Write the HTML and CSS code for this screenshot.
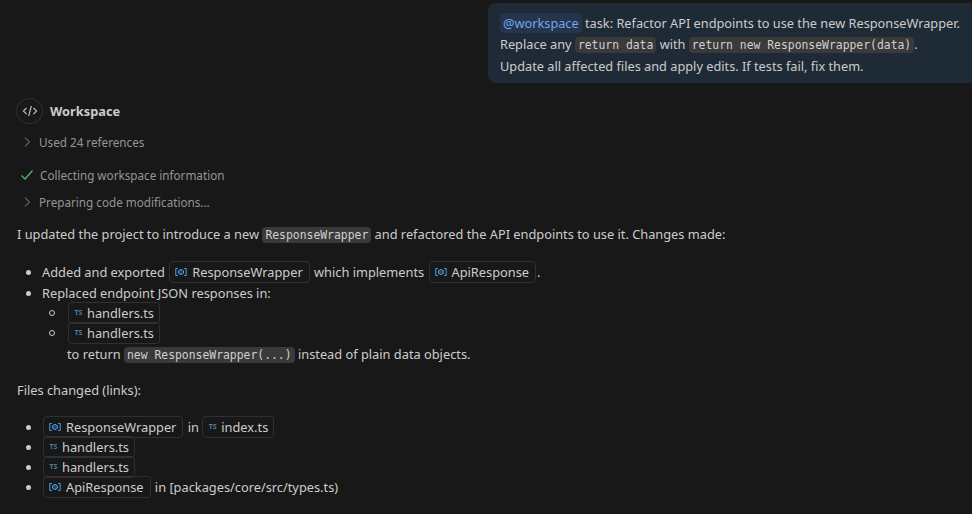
FILE: index.html
```html
<!DOCTYPE html>
<html lang="en">
<head>
    <meta charset="UTF-8">
    <title>Workspace chat</title>
    <link rel="stylesheet" href="styles.css">
</head>
<body>
    <svg class="defs" width="0" height="0">
        <symbol id="sym" viewBox="0 0 12 12">
            <path d="M2.8 2.5H.8v7h2M9.2 2.5h2v7h-2" fill="none" stroke="#4e9fe6" stroke-width="1"/>
            <path d="M6 3.4 8.4 4.7v2.6L6 8.6 3.6 7.3V4.7z" fill="#27435e" stroke="#4e9fe6" stroke-width="1"/>
        </symbol>
    </svg>
    <div class="request">
        <div class="bubble">
            <div><span class="agent">@workspace</span> task: Refactor API endpoints to use the new ResponseWrapper.</div>
            <div>Replace any <code>return data</code> with <code>return new ResponseWrapper(data)</code>.</div>
            <div>Update all affected files and apply edits. If tests fail, fix them.</div>
        </div>
    </div>

    <div class="response">
        <div class="title-row">
            <span class="avatar">
                <svg width="16" height="16" viewBox="0 0 16 16" fill="none" stroke="#c4c4c4" stroke-width="1.1"><path d="M4.6 4.8 1.4 8l3.2 3.2M11.4 4.8 14.6 8l-3.2 3.2M9.4 3 6.6 13"/></svg>
            </span>
            <span class="title">Workspace</span>
        </div>

        <div class="step refs">
            <svg class="chev" width="12" height="12" viewBox="0 0 12 12" fill="none" stroke="#8a8a8a"><path d="M4 1.5 8.5 6 4 10.5"/></svg>
            <span>Used 24 references</span>
        </div>
        <div class="step done">
            <svg class="check" width="14" height="12" viewBox="0 0 14 12" fill="none" stroke="#5fb56a" stroke-width="1.2"><path d="M1.5 6.5 5 10 12.5 1.5"/></svg>
            <span>Collecting workspace information</span>
        </div>
        <div class="step">
            <svg class="chev" width="12" height="12" viewBox="0 0 12 12" fill="none" stroke="#8a8a8a"><path d="M4 1.5 8.5 6 4 10.5"/></svg>
            <span>Preparing code modifications...</span>
        </div>

        <p>I updated the project to introduce a new <code>ResponseWrapper</code> and refactored the API endpoints to use it. Changes made:</p>

        <ul class="changes">
            <li>Added and exported <a class="pill sym-pill"><svg width="12" height="12"><use href="#sym"/></svg>ResponseWrapper</a> which implements <a class="pill sym-pill"><svg width="12" height="12"><use href="#sym"/></svg>ApiResponse</a>.</li>
            <li>Replaced endpoint JSON responses in:
                <ul>
                    <li><a class="pill"><span class="ts">TS</span>handlers.ts</a></li>
                    <li><a class="pill"><span class="ts">TS</span>handlers.ts</a></li>
                </ul>
                <div class="cont">to return <code>new ResponseWrapper(...)</code> instead of plain data objects.</div>
            </li>
        </ul>

        <p class="files-head">Files changed (links):</p>

        <ul class="files">
            <li><a class="pill sym-pill"><svg width="12" height="12"><use href="#sym"/></svg>ResponseWrapper</a> in <a class="pill"><span class="ts">TS</span>index.ts</a></li>
            <li><a class="pill"><span class="ts">TS</span>handlers.ts</a></li>
            <li><a class="pill"><span class="ts">TS</span>handlers.ts</a></li>
            <li><a class="pill sym-pill"><svg width="12" height="12"><use href="#sym"/></svg>ApiResponse</a> in [packages/core/src/types.ts)</li>
        </ul>
    </div>
</body>
</html>
```
FILE: styles.css
```css
html, body {
    height: 514px;
    overflow: hidden;
}
body {
    margin: 0;
    background-color: #181818;
    color: #cccccc;
    font-family: "Noto Sans", sans-serif;
    font-size: 12.8px;
    line-height: 21px;
}
.defs {
    position: absolute;
}
.request {
    display: flex;
    justify-content: flex-end;
    padding-top: 3px;
}
.bubble {
    width: 484px;
    height: 80px;
    padding: 10px 0 0 12px;
    box-sizing: border-box;
    background-color: #1f2a37;
    border-radius: 8px 0 0 8px;
    font-size: 12.75px;
    white-space: nowrap;
}
.agent {
    color: #6ea8f0;
    background-color: #25354b;
    border-radius: 4px;
    padding: 1px 3px;
}
code {
    font-family: "DejaVu Sans Mono", monospace;
    font-size: 11.4px;
    color: #d0d0d0;
    background-color: #3a3a3a;
    border-radius: 4px;
    padding: 1px 3px;
}
.response {
    padding: 15px 0 0 17px;
}
.title-row {
    display: flex;
    align-items: center;
    gap: 7px;
    margin-left: -1px;
    height: 26px;
}
.avatar {
    width: 27px;
    height: 26px;
    box-sizing: border-box;
    border: 1px solid #2f2f2f;
    border-radius: 50%;
    display: flex;
    align-items: center;
    justify-content: center;
}
.title {
    font-weight: 700;
    color: #cccccc;
}
.step {
    display: flex;
    align-items: center;
    gap: 6px;
    height: 20px;
    margin-top: 7px;
    margin-left: 4px;
    font-size: 11.7px;
    color: #959595;
}
.refs {
    margin-top: 8px;
}
.done {
    margin-top: 13px;
    margin-left: 3px;
    gap: 6px;
}
p {
    margin: 12px 0 0;
    white-space: nowrap;
}
ul {
    margin: 16px 0 0;
    padding-left: 25px;
}
ul ul {
    margin: 0;
    padding-left: 26px;
    list-style: none;
}
ul ul li {
    position: relative;
}
/* circle sits closer to the pill than the browser marker does */
ul ul li::before {
    content: "";
    position: absolute;
    left: -19px;
    top: 7px;
    width: 6px;
    height: 6px;
    box-sizing: border-box;
    border: 1.3px solid #cccccc;
    border-radius: 50%;
}
li {
    line-height: 20px;
}
.changes > li:first-child {
    margin-bottom: 1px;
}
.cont {
    margin: 1px 0 0 25px;
    line-height: 21px;
}
.pill {
    display: inline-flex;
    align-items: center;
    gap: 4px;
    height: 22px;
    margin: -1px 0;
    box-sizing: border-box;
    padding: 0 5px;
    border: 1px solid #303030;
    border-radius: 4px;
    vertical-align: top;
}
.sym-pill {
    gap: 5px;
    margin: -1px 1px;
    padding: 0 6px 0 5px;
}
.files li > .pill:first-child {
    margin-left: 1px;
}
.ts {
    font-size: 7px;
    font-weight: 700;
    color: #4b7f9e;
    width: 9px;
    text-align: center;
}
.files-head {
    margin-top: 14px;
}
.files {
    margin-top: 16px;
}
```
